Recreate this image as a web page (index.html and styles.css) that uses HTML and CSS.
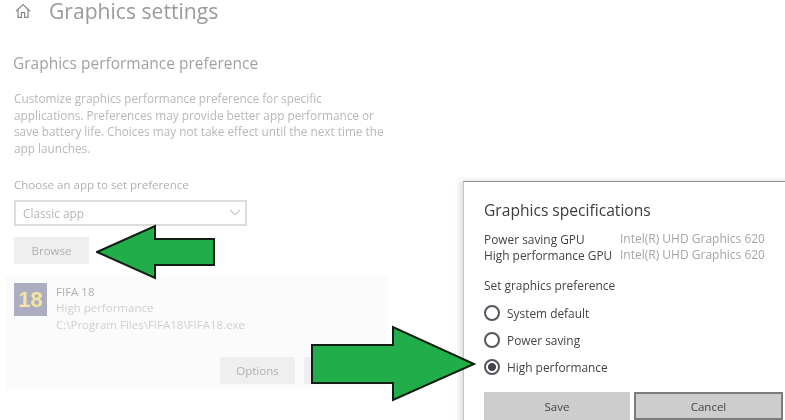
FILE: index.html
```html
<!DOCTYPE html>
<html lang="en">
<head>
    <meta charset="UTF-8">
    <meta name="viewport" content="width=device-width, initial-scale=1.0">
    <title>Graphics settings</title>
    <link rel="stylesheet" href="styles.css">
</head>
<body>
    <div class="page">
        <div class="settings">
            <header class="title-row">
                <svg class="home-icon" width="16" height="16" viewBox="0 0 16 16" fill="none" stroke="#8a8a8a" stroke-width="1.2">
                    <path d="M1 8.2 8 1.6l7 6.6"/>
                    <path d="M3 6.6V14.4h3.4V9.6h3.2v4.8H13V6.6"/>
                </svg>
                <h1>Graphics settings</h1>
            </header>

            <h2>Graphics performance preference</h2>
            <p class="intro">Customize graphics performance preference for specific applications. Preferences may provide better app performance or save battery life. Choices may not take effect until the next time the app launches.</p>

            <label class="choose-label">Choose an app to set preference</label>
            <div class="select-box">
                <span>Classic app</span>
                <svg width="12" height="7" viewBox="0 0 12 7" fill="none" stroke="#c8c8c8" stroke-width="1.1">
                    <path d="M1 1l5 5 5-5"/>
                </svg>
            </div>
            <button class="btn browse" type="button">Browse</button>

            <div class="app-card">
                <div class="app-row">
                    <div class="app-icon">18</div>
                    <div class="app-info">
                        <div class="app-name">FIFA 18</div>
                        <div>High performance</div>
                        <div>C:\Program Files\FIFA18\FIFA18.exe</div>
                    </div>
                </div>
                <div class="app-actions">
                    <button class="btn" type="button">Options</button>
                    <button class="btn" type="button">Remove</button>
                </div>
            </div>
        </div>

        <div class="dialog">
            <h3>Graphics specifications</h3>
            <div class="spec-grid">
                <span>Power saving GPU</span><span class="spec-value">Intel(R) UHD Graphics 620</span>
                <span>High performance GPU</span><span class="spec-value">Intel(R) UHD Graphics 620</span>
            </div>
            <div class="pref-label">Set graphics preference</div>
            <div class="radio-list">
                <div class="radio-row"><span class="radio"></span>System default</div>
                <div class="radio-row"><span class="radio"></span>Power saving</div>
                <div class="radio-row"><span class="radio checked"></span>High performance</div>
            </div>
            <div class="dialog-actions">
                <button class="dialog-btn" type="button">Save</button>
                <button class="dialog-btn cancel" type="button">Cancel</button>
            </div>
        </div>

        <svg class="arrow arrow-left" width="126" height="60" viewBox="96 222 126 60">
            <polygon points="97,252 155,226 155,239 214,239 214,265 155,265 155,278"/>
        </svg>
        <svg class="arrow arrow-right" width="170" height="80" viewBox="308 324 170 80">
            <polygon points="312,345 393,345 393,327 474,364 393,400 393,383 312,383"/>
        </svg>
    </div>
</body>
</html>
```

FILE: styles.css
```css
html, body {
    margin: 0;
    padding: 0;
    background: #fff;
}

.page {
    position: relative;
    width: 785px;
    height: 420px;
    overflow: hidden;
    font-family: "Open Sans", "Noto Sans", sans-serif;
    color: #333;
}

.settings {
    width: 383px;
    padding-left: 5px;
    filter: blur(0.5px);
}

.title-row {
    display: flex;
    align-items: center;
    gap: 18px;
    height: 21px;
    padding: 0 0 0 10px;
}

.home-icon {
    flex-shrink: 0;
}

h1 {
    margin: 0;
    font-size: 21.1px;
    font-weight: 400;
    line-height: 21px;
    color: #9a9a9a;
}

h2 {
    margin: 31px 0 0 8px;
    font-size: 15.5px;
    font-weight: 400;
    line-height: 22px;
    color: #a2a2a2;
}

.intro {
    margin: 16px 0 0 9px;
    width: 372px;
    font-size: 11.8px;
    line-height: 16.7px;
    color: #b8b8b8;
}

.choose-label {
    display: block;
    margin: 20px 0 0 9px;
    font-size: 11.5px;
    line-height: 16px;
    color: #b0b0b0;
}

.select-box {
    display: flex;
    align-items: center;
    justify-content: space-between;
    box-sizing: border-box;
    width: 233px;
    height: 26px;
    margin: 7px 0 0 9px;
    padding: 0 4px 0 7px;
    border: 2px solid #dcdcdc;
    font-size: 11.8px;
    color: #b5b5b5;
}

.btn {
    height: 27px;
    width: 75px;
    padding: 0;
    border: none;
    background: #efefef;
    font-family: inherit;
    font-size: 11.5px;
    color: #b0b0b0;
}

.browse {
    display: block;
    margin: 11px 0 0 9px;
}

.app-card {
    box-sizing: border-box;
    height: 116px;
    margin-top: 11px;
    padding: 8px 9px 7px;
    background: #fbfbfb;
}

.app-row {
    display: flex;
    gap: 9px;
}

.app-icon {
    width: 33px;
    height: 33px;
    background: #adadc2;
    font-family: "Liberation Sans", sans-serif;
    font-size: 22px;
    font-weight: 700;
    line-height: 33px;
    text-align: center;
    color: #f4e6a2;
}

.app-info {
    font-size: 11.5px;
    line-height: 16.6px;
    color: #cfcfcf;
}

.app-name {
    margin-top: 1px;
    color: #b0b0b0;
}

.app-actions {
    display: flex;
    justify-content: flex-end;
    gap: 9px;
    margin-top: 23px;
}

.dialog {
    position: absolute;
    left: 463px;
    top: 181px;
    width: 340px;
    height: 260px;
    box-sizing: border-box;
    padding: 18px 0 0 20px;
    background: #fff;
    border-top: 1px solid #8c9096;
    border-left: 1px solid #c4c4c4;
    box-shadow: -3px 0 6px rgba(0, 0, 0, 0.14);
    font-size: 11.9px;
    color: #444;
    filter: blur(0.3px);
}

h3 {
    margin: 0;
    font-size: 15.6px;
    font-weight: 400;
    line-height: 20px;
    color: #3c3c3c;
}

.spec-grid {
    display: grid;
    grid-template-columns: 136px auto;
    justify-content: start;
    margin-top: 11px;
    line-height: 16px;
}

.spec-value {
    font-size: 12px;
    color: #a5a5a5;
}

.pref-label {
    margin-top: 14px;
    line-height: 16px;
}

.radio-list {
    display: flex;
    flex-direction: column;
    gap: 7px;
    margin-top: 10px;
}

.radio-row {
    display: flex;
    align-items: center;
    gap: 7px;
    height: 20px;
}

.radio {
    box-sizing: border-box;
    width: 16px;
    height: 16px;
    border: 2px solid #55555f;
    border-radius: 50%;
}

.radio.checked {
    background: radial-gradient(circle, #44444e 0 3.6px, #fff 4.4px);
}

.dialog-actions {
    display: flex;
    gap: 4px;
    margin-top: 15px;
}

.dialog-btn {
    box-sizing: border-box;
    width: 146px;
    height: 28px;
    padding: 0;
    border: none;
    background: #cdcdcd;
    font-family: inherit;
    font-size: 11.5px;
    color: #444;
}

.dialog-btn.cancel {
    width: 149px;
    border: 2px solid #7c7c7c;
}

.arrow {
    position: absolute;
}

.arrow polygon {
    fill: #22ad4b;
    stroke: #0f1f12;
    stroke-width: 2;
    stroke-linejoin: miter;
}

.arrow-left {
    left: 96px;
    top: 222px;
}

.arrow-right {
    left: 308px;
    top: 324px;
}
```
